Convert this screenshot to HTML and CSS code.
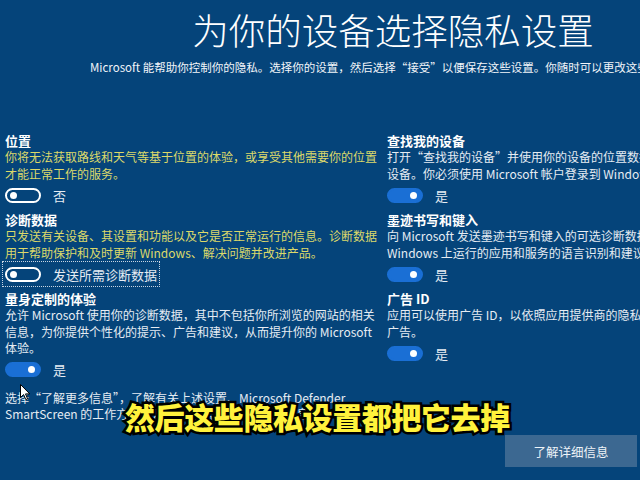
FILE: index.html
```html
<!DOCTYPE html>
<html lang="zh-CN">
<head>
<meta charset="utf-8">
<title>为你的设备选择隐私设置</title>
<link rel="stylesheet" href="styles.css">
</head>
<body>
  <header class="head">
    <h1 class="title">为你的设备选择隐私设置</h1>
    <p class="intro">Microsoft 能帮助你控制你的隐私。选择你的设置，然后选择“接受”以便保存这些设置。你随时可以更改这些设置。</p>
  </header>

  <main class="scroll">
    <div class="cols">
      <div class="col">
        <section class="section">
          <h2 class="heading">位置</h2>
          <p class="desc warn">你将无法获取路线和天气等基于位置的体验，或享受其他需要你的位置才能正常工作的服务。</p>
          <div class="switch-row"><span class="toggle"></span><span class="label">否</span></div>
        </section>
        <section class="section">
          <h2 class="heading">诊断数据</h2>
          <p class="desc warn">只发送有关设备、其设置和功能以及它是否正常运行的信息。诊断数据用于帮助保护和及时更新 Windows、解决问题并改进产品。</p>
          <div class="switch-row focus"><span class="toggle"></span><span class="label">发送所需诊断数据</span></div>
        </section>
        <section class="section">
          <h2 class="heading">量身定制的体验</h2>
          <p class="desc">允许 Microsoft 使用你的诊断数据，其中不包括你所浏览的网站的相关信息，为你提供个性化的提示、广告和建议，从而提升你的 Microsoft 体验。</p>
          <div class="switch-row"><span class="toggle on"></span><span class="label">是</span></div>
        </section>
        <p class="more">选择“了解更多信息”，了解有关上述设置、Microsoft Defender SmartScreen 的工作方式以及相关数据传输和使用的信息。</p>
      </div>

      <div class="col">
        <section class="section">
          <h2 class="heading">查找我的设备</h2>
          <p class="desc nowrap">打开“查找我的设备”并使用你的设备的位置数据，以帮助你找到丢失的<br>设备。你必须使用 Microsoft 帐户登录到 Windows 才能使用此功能。</p>
          <div class="switch-row"><span class="toggle on"></span><span class="label">是</span></div>
        </section>
        <section class="section">
          <h2 class="heading">墨迹书写和键入</h2>
          <p class="desc nowrap">向 Microsoft 发送墨迹书写和键入的可选诊断数据，以帮助改进<br>Windows 上运行的应用和服务的语言识别和建议功能。</p>
          <div class="switch-row"><span class="toggle on"></span><span class="label">是</span></div>
        </section>
        <section class="section">
          <h2 class="heading">广告 ID</h2>
          <p class="desc nowrap">应用可以使用广告 ID，以依照应用提供商的隐私策略为你提供更相关的<br>广告。</p>
          <div class="switch-row"><span class="toggle on"></span><span class="label">是</span></div>
        </section>
      </div>
    </div>
  </main>

  <footer class="foot">
    <button class="btn" type="button">了解详细信息</button>
  </footer>

  <svg class="cursor" width="11" height="17" viewBox="0 0 11 17" aria-hidden="true">
    <path d="M0.5 0.5 L0.5 13.5 L3.6 10.6 L5.8 15.6 L7.6 14.8 L5.5 9.9 L9.8 9.9 Z" fill="#fff" stroke="#000" stroke-width="1"/>
  </svg>

  <div class="caption">然后这些隐私设置都把它去掉</div>
</body>
</html>
```

FILE: styles.css
```css
html, body {
  margin: 0;
  padding: 0;
  width: 640px;
  height: 480px;
  overflow: hidden;
  background: #05447a;
}

body {
  position: relative;
  font-family: "Noto Sans CJK SC", "Noto Sans", sans-serif;
  color: #ffffff;
}

.head {
  width: 786px;
}

.title {
  margin: 8px 0 0;
  font-size: 36.5px;
  font-weight: 300;
  line-height: 44px;
  text-align: center;
  color: #ffffff;
}

.intro {
  margin: 7px 0 0;
  padding-left: 90px;
  font-size: 11.5px;
  line-height: 16px;
  white-space: nowrap;
  color: #f2f5f9;
}

.scroll {
  margin-top: 57px;
  height: 288px;
  overflow: hidden;
}

.cols {
  display: grid;
  grid-template-columns: 375px 420px;
  column-gap: 7px;
  padding-left: 5px;
}

.section {
  margin-bottom: 6px;
}

.heading {
  margin: 0;
  font-size: 13px;
  font-weight: 700;
  line-height: 17px;
  color: #ffffff;
}

.desc {
  margin: 0;
  font-size: 12px;
  line-height: 16.5px;
  color: #e6ecf3;
}

.desc.warn {
  color: #dcd96a;
}

.desc.nowrap {
  white-space: nowrap;
}

.switch-row {
  display: flex;
  align-items: center;
  gap: 12px;
  width: max-content;
  height: 20px;
  margin-top: 3px;
  font-size: 13px;
  color: #e6ecf3;
}

.switch-row.focus {
  outline: 1px dotted #c9d5e2;
  outline-offset: 2px;
}

.toggle {
  position: relative;
  box-sizing: border-box;
  width: 36px;
  height: 15px;
  border: 2px solid #ffffff;
  border-radius: 8px;
}

.toggle::after {
  content: "";
  position: absolute;
  top: 2px;
  left: 3px;
  width: 7px;
  height: 7px;
  border-radius: 50%;
  background: #ffffff;
}

.toggle.on {
  background: #1a6fd5;
  border-color: #1a6fd5;
}

.toggle.on::after {
  left: auto;
  right: 4px;
}

.more {
  margin: 10px 0 0;
  font-size: 12px;
  line-height: 16px;
  color: #e6ecf3;
}

.foot {
  display: flex;
  justify-content: flex-end;
  padding: 15px 3px 0 0;
}

.btn {
  width: 132px;
  height: 32px;
  border: 0;
  padding: 0;
  background: #3c6891;
  color: #eef3f8;
  font-family: "Noto Sans CJK SC", sans-serif;
  font-size: 12.5px;
}

.cursor {
  position: absolute;
  left: 20px;
  top: 384px;
}

.caption {
  position: absolute;
  left: 125px;
  top: 398px;
  font-size: 30px;
  font-weight: 900;
  line-height: 36px;
  letter-spacing: -0.4px;
  white-space: nowrap;
  color: #fff23c;
  -webkit-text-stroke: 5px #000000;
  paint-order: stroke fill;
}
```
